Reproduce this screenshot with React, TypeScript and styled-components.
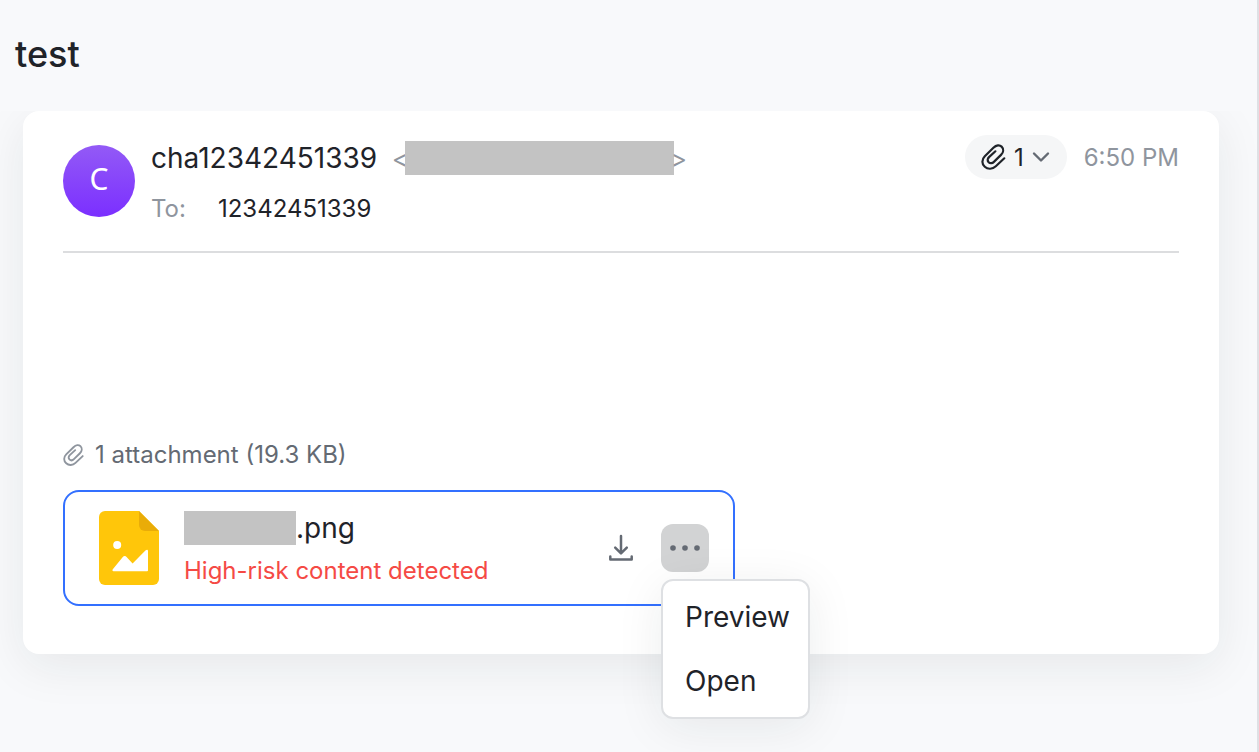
import React, { useState } from "react";
import styled, { createGlobalStyle } from "styled-components";

const GlobalStyle = createGlobalStyle`
  * { box-sizing: border-box; }
  body {
    margin: 0;
    background: #f8f9fb;
    color: #1f2329;
    font-family: Inter, "Liberation Sans", sans-serif;
  }
  button { font: inherit; color: inherit; border: 0; padding: 0; cursor: pointer; }
`;

const Page = styled.main`
  display: flex;
  flex-direction: column;
  min-height: 100vh;
  border-right: 2px solid #dfe0e4;
`;

const Subject = styled.h1`
  margin: 0;
  padding: 30px 15px 33px;
  font-size: 36px;
  line-height: 48px;
  font-weight: 500;
`;

const Thread = styled.div`
  flex: 1;
  padding: 0 38px 98px 23px;
  overflow: hidden;
`;

const Card = styled.article`
  padding: 24px 40px 48px;
  border-radius: 16px;
  background: #fff;
  box-shadow: 0 12px 48px rgba(31, 35, 41, 0.08);
`;

const Header = styled.header`
  display: flex;
  align-items: flex-start;
  height: 118px;
  border-bottom: 2px solid #dcdddf;
`;

const Avatar = styled.div`
  flex: none;
  width: 72px;
  height: 72px;
  margin: 10px 16px 0 0;
  border-radius: 50%;
  background: linear-gradient(#935af6, #7b2fff);
  color: #fff;
  font-family: "Noto Sans", sans-serif;
  font-size: 30px;
  line-height: 68px;
  text-align: center;
`;

const People = styled.div`
  flex: 1;
  min-width: 0;
`;

const Sender = styled.div`
  display: flex;
  align-items: center;
  height: 46px;
  font-size: 28px;
`;

const Address = styled.span`
  display: flex;
  align-items: center;
  margin-left: 15px;
  color: #8f959e;
  font-size: 24px;
`;

const Redacted = styled.span<{ $width: number; $overlap?: number }>`
  width: ${(p) => p.$width}px;
  height: 34px;
  margin: 0 -${(p) => p.$overlap ?? 0}px;
  background: #c3c3c3;
`;

const Recipient = styled.div`
  display: flex;
  gap: 32px;
  margin-top: 12px;
  font-size: 24px;
  line-height: 32px;
`;

const Muted = styled.span`
  color: #8f959e;
`;

const Meta = styled.div`
  display: flex;
  align-items: center;
  gap: 17px;
  font-size: 24px;
`;

const CountButton = styled.button`
  display: flex;
  align-items: center;
  gap: 7px;
  height: 44px;
  padding: 0 16px;
  border-radius: 22px;
  background: #f5f6f7;
`;

const Attachments = styled.section`
  padding-top: 186px;
`;

const Summary = styled.h2`
  display: flex;
  align-items: center;
  gap: 10px;
  margin: 0 0 19px;
  color: #646a73;
  font-size: 24px;
  line-height: 32px;
  font-weight: 400;
`;

const FileCard = styled.div`
  display: flex;
  align-items: center;
  width: 60%;
  min-width: 672px;
  height: 116px;
  padding: 0 24px 0 34px;
  border: 2px solid #3370ff;
  border-radius: 16px;
`;

const FileText = styled.div`
  flex: 1;
  margin-left: 25px;
  padding-top: 1px;
`;

const FileName = styled.div`
  display: flex;
  align-items: center;
  height: 34px;
  font-size: 28px;
`;

const Warning = styled.div`
  margin-top: 10px;
  color: #f54a45;
  font-size: 24px;
  line-height: 32px;
`;

const IconButton = styled.button<{ $active?: boolean }>`
  display: grid;
  place-items: center;
  width: 48px;
  height: 48px;
  border-radius: 12px;
  background: ${(p) => (p.$active ? "#d2d3d4" : "transparent")};
  color: #646a73;
`;

const MenuAnchor = styled.div`
  position: relative;
  margin-left: 16px;
`;

const Menu = styled.div`
  position: absolute;
  top: 55px;
  left: 0;
  z-index: 1;
  display: flex;
  flex-direction: column;
  width: 149px;
  padding: 4px 0;
  border: 2px solid #dee0e3;
  border-radius: 12px;
  background: #fff;
  box-shadow: 0 8px 48px rgba(31, 35, 41, 0.08);
`;

const MenuItem = styled.button`
  height: 64px;
  padding: 0 22px;
  background: none;
  text-align: left;
  font-size: 28px;
`;

const Clip = ({ size, color }: { size: number; color: string }) => (
  <svg width={size} height={size} viewBox="0 0 26 26" fill="none" stroke={color} strokeWidth="2.2" strokeLinecap="round" overflow="visible" aria-hidden="true">
    <path d="M23.300 14.300L14.800 22.300C11.500 25.400 6.800 25.600 3.800 22.800C.6 19.800.6 15.500 3.800 12.300L12.400 3.800C15.400.8 18.600.6 20.600 2.600C22.900 4.900 22.600 8.300 20 10.900L12.900 17.900C11.300 19.500 9 19.600 7.600 18.200C6.200 16.800 6.400 14.700 8 13.100L14.400 7.300" />
  </svg>
);

const Chevron = () => (
  <svg width="20" height="12" viewBox="0 0 20 12" fill="none" stroke="#646a73" strokeWidth="2.4" strokeLinecap="round" strokeLinejoin="round" aria-hidden="true">
    <path d="M3 2.500l7 7 7-7" />
  </svg>
);

const ImageFile = () => (
  <svg width="60" height="74" viewBox="0 0 60 74" aria-hidden="true">
    <path d="M6 0h34l20 20v48a6 6 0 0 1-6 6H6a6 6 0 0 1-6-6V6a6 6 0 0 1 6-6z" fill="#ffc60a" />
    <path d="M40 0l20 20H46a6 6 0 0 1-6-6z" fill="#e9ac08" />
    <circle cx="18.2" cy="34" r="4" fill="#fff" />
    <path d="M13.600 58.600l10-12.400q2.100-2.200 4.200 0l5.800 6.300 12.800-13q2.600-1.600 2.600.8v19q0 .9-.9.9H14.400q-1.500-.1-.8-1.600z" fill="#fff" />
  </svg>
);

const Download = () => (
  <svg width="24" height="28" viewBox="0 0 24 28" fill="none" stroke="currentColor" strokeWidth="2.5" strokeLinecap="round" strokeLinejoin="round" aria-hidden="true">
    <path d="M12 2v17M6.200 13.600l5.800 5.800 5.800-5.800M1.300 22.500v3h21.400v-3" />
  </svg>
);

const Dots = () => (
  <svg width="30" height="6" viewBox="0 0 30 6" fill="currentColor" aria-hidden="true">
    <circle cx="3" cy="3" r="2.8" />
    <circle cx="15" cy="3" r="2.8" />
    <circle cx="27" cy="3" r="2.8" />
  </svg>
);

export default function App() {
  const [open, setOpen] = useState(true);
  return (
    <>
      <GlobalStyle />
      <Page>
        <Subject>test</Subject>
        <Thread>
          <Card>
            <Header>
              <Avatar>C</Avatar>
              <People>
                <Sender>
                  cha12342451339
                  <Address>
                    &lt;
                    <Redacted $width={269} $overlap={3} />
                    &gt;
                  </Address>
                </Sender>
                <Recipient>
                  <Muted>To:</Muted>
                  <span>12342451339</span>
                </Recipient>
              </People>
              <Meta>
                <CountButton type="button">
                  <Clip size={26} color="#1f2329" />
                  1
                  <Chevron />
                </CountButton>
                <Muted as="time">6:50 PM</Muted>
              </Meta>
            </Header>
            <Attachments>
              <Summary>
                <Clip size={22} color="#8f959e" />
                1 attachment (19.3 KB)
              </Summary>
              <FileCard>
                <ImageFile />
                <FileText>
                  <FileName>
                    <Redacted $width={112} />
                    .png
                  </FileName>
                  <Warning>High-risk content detected</Warning>
                </FileText>
                <IconButton type="button" aria-label="Download">
                  <Download />
                </IconButton>
                <MenuAnchor>
                  <IconButton type="button" aria-label="More" aria-expanded={open} $active={open} onClick={() => setOpen(!open)}>
                    <Dots />
                  </IconButton>
                  {open && (
                    <Menu role="menu">
                      <MenuItem type="button" role="menuitem">Preview</MenuItem>
                      <MenuItem type="button" role="menuitem">Open</MenuItem>
                    </Menu>
                  )}
                </MenuAnchor>
              </FileCard>
            </Attachments>
          </Card>
        </Thread>
      </Page>
    </>
  );
}
